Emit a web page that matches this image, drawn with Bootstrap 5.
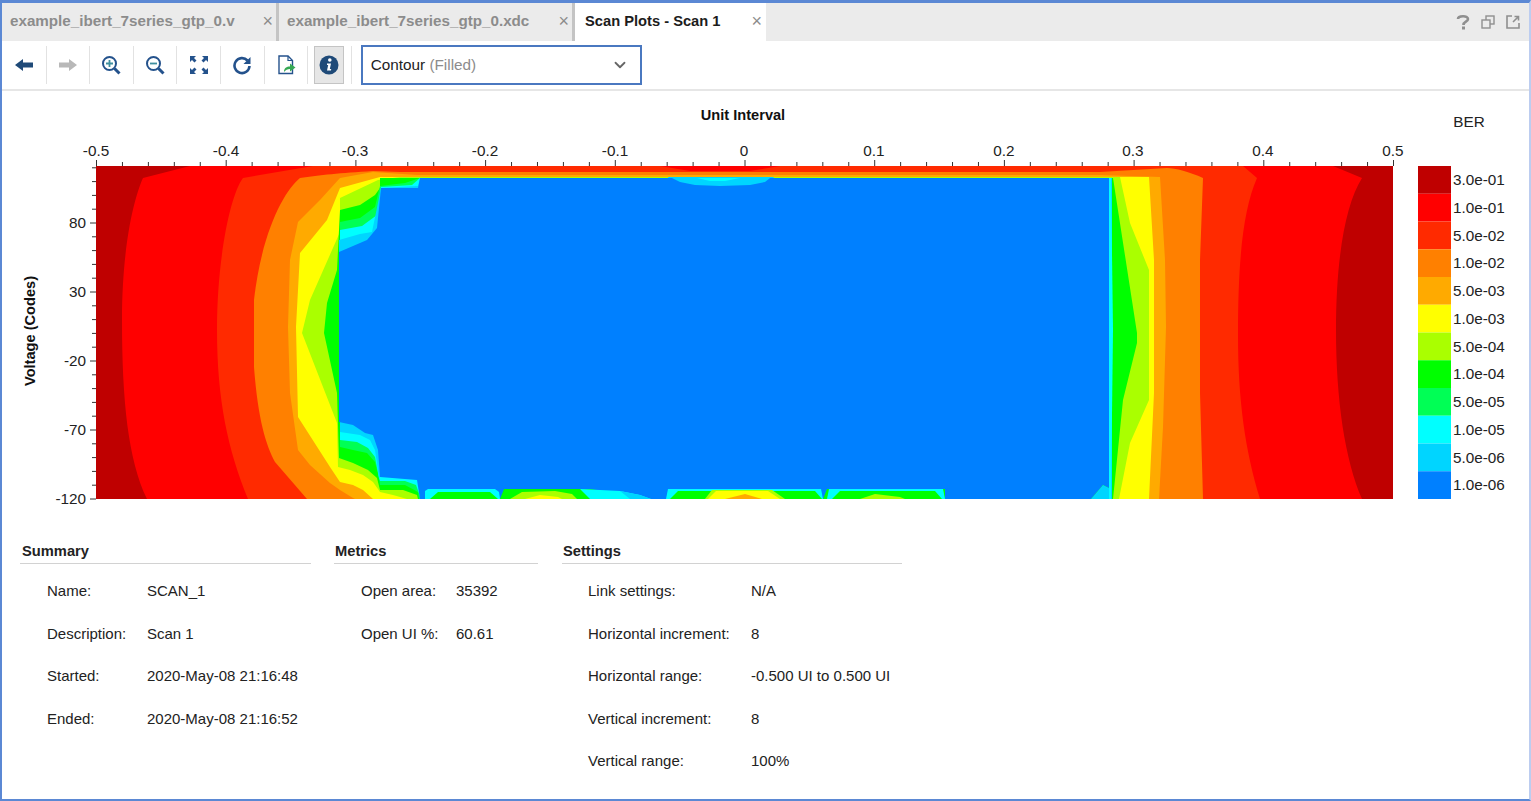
<!DOCTYPE html>
<html lang="en">
<head>
    <meta charset="UTF-8">
    <meta name="viewport" content="width=device-width, initial-scale=1.0">
    <title>Scan Plots - Scan 1</title>
    <link href="https://cdn.jsdelivr.net/npm/bootstrap@5.3.0/dist/css/bootstrap.min.css" rel="stylesheet">
    <style>
        html, body { height: 100%; }
        body {
            font-family: "Liberation Sans", Arial, sans-serif;
            font-size: 15px;
            color: #222;
            overflow: hidden;
        }
        .app-window {
            height: 801px;
            border: 2px solid #5b88d4;
            border-top-width: 3px;
            border-right-color: #bccdf0;
        }
        .tab-strip { height: 38px; background: #ebebeb; }
        .tab-item {
            height: 36px;
            font-weight: 700;
            font-size: 15.2px;
            color: #8c8c8c;
            border-right: 3px solid #c4c4c4;
        }
        .tab-strip > .tab-item { align-self: flex-start; height: 38px; padding-bottom: 2px; }
        .tab-item.t1 { width: 277px; padding-left: 8px; }
        .tab-item.t2 { width: 296px; padding-left: 8px; }
        .tab-item.t1 .tab-close, .tab-item.t2 .tab-close { margin-right: 3px; }
        .tab-item.active {
            width: 191px;
            padding-left: 10px;
            font-size: 14.7px;
            background: #fff;
            color: #1c1c1c;
            border-right: 0;
        }
        .tab-close { color: #8c8c8c; font-weight: 400; font-size: 18px; }
        .tab-tools { gap: 11px; padding-right: 9px; }
        .tool-bar {
            height: 50px;
            border-bottom: 2px solid #e6e6e6;
            padding-left: 1px;
        }
        .tool-btn {
            width: 43.6px;
            height: 38px;
            border-right: 1px solid #e2e2e2;
        }
        .tool-btn.is-on svg {
            background: #e6e6e6;
            box-shadow: 0 0 0 1px #c4c4c4;
            box-sizing: content-box;
            height: 20px;
            width: 20px;
            padding: 8px 4px;
        }
        .mode-select {
            width: 281px;
            height: 40px;
            margin-left: 9px;
            border: 2px solid #4a78c0;
            border-radius: 0;
            font-size: 15.3px;
            color: #222;
            padding: 7px 12px 0 8px;
            background-image: url("data:image/svg+xml,%3csvg xmlns='http://www.w3.org/2000/svg' viewBox='0 0 16 16'%3e%3cpath fill='none' stroke='%23666' stroke-linecap='round' stroke-linejoin='round' stroke-width='2.4' d='m2 5 6 6 6-6'/%3e%3c/svg%3e");
        }
        .mode-select span { color: #8c8c8c; }
        .plot { display: block; }
        .plot text { font-family: "Liberation Sans", Arial, sans-serif; font-size: 15.3px; fill: #222; }
        .plot .axis-title { font-weight: 700; font-size: 14.6px; fill: #111; }
        .details { padding-left: 18px; }
        .detail-group .heading {
            font-weight: 700;
            font-size: 14.7px;
            color: #222;
            height: 25px;
            line-height: 24px;
            padding-left: 1px;
            border-bottom: 1px solid #d2d2d2;
            margin-bottom: 6px;
        }
        .g-summary .heading { padding-left: 2px; }
        .detail-row { height: 42.5px; line-height: 42.5px; padding-left: 27px; white-space: nowrap; }
        .g-summary { width: 291px; margin-right: 23px; }
        .g-metrics { width: 204px; margin-right: 24px; }
        .g-settings { width: 340px; }
        .g-settings .detail-row { padding-left: 26px; }
        .g-summary .lbl { width: 100px; }
        .g-metrics .lbl { width: 95px; }
        .g-settings .lbl { width: 163px; }
    </style>
</head>
<body class="m-0">
    <div class="app-window d-flex flex-column bg-white">
        <!-- Tabs -->
        <div class="tab-strip d-flex align-items-center">
            <div class="tab-item t1 d-flex align-items-center justify-content-between">
                <span>example_ibert_7series_gtp_0.v</span><span class="tab-close">&#215;</span>
            </div>
            <div class="tab-item t2 d-flex align-items-center justify-content-between">
                <span>example_ibert_7series_gtp_0.xdc</span><span class="tab-close">&#215;</span>
            </div>
            <div class="tab-item active d-flex align-items-center justify-content-between pe-1">
                <span>Scan Plots - Scan 1</span><span class="tab-close">&#215;</span>
            </div>
            <div class="tab-tools d-flex align-items-center ms-auto">
                <svg width="14" height="16" viewBox="0 0 14 16"><path d="M2 5 C2 1.5 12 1 12 5 C12 8 7.5 7.5 7.5 11" fill="none" stroke="#8f8f8f" stroke-width="2.6"/><rect x="6" y="12.5" width="3" height="3" fill="#8f8f8f"/></svg>
                <svg width="14" height="14" viewBox="0 0 14 14" fill="#ebebeb" stroke="#8f8f8f" stroke-width="1.4"><rect x="5" y="1" width="8" height="8"/><rect x="1" y="5" width="8" height="8"/></svg>
                <svg width="14" height="14" viewBox="0 0 14 14" fill="none" stroke="#8f8f8f" stroke-width="1.6"><path d="M6 1H1V13H13V8"/><path d="M7 7L12 2M8.5 1.5H12.5V5.5"/></svg>
            </div>
        </div>

        <!-- Toolbar -->
        <div class="tool-bar d-flex align-items-center">
            <div class="tool-btn d-flex align-items-center justify-content-center">
                <svg width="20" height="20" viewBox="0 0 20 20"><path d="M1 10L9 4V7.5H19V12.5H9V16Z" fill="#1f4a78"/></svg>
            </div>
            <div class="tool-btn d-flex align-items-center justify-content-center">
                <svg width="20" height="20" viewBox="0 0 20 20"><path d="M19 10L11 4V7.5H1V12.5H11V16Z" fill="#b8b8b8"/></svg>
            </div>
            <div class="tool-btn d-flex align-items-center justify-content-center">
                <svg width="20" height="20" viewBox="0 0 20 20" fill="none" stroke="#24528c"><circle cx="8.5" cy="8.5" r="6.5" stroke-width="2"/><path d="M13.5 13.5L18.5 18.5" stroke-width="3"/><path d="M8.5 5V12M5 8.5H12" stroke="#3f8f9f" stroke-width="1.8"/></svg>
            </div>
            <div class="tool-btn d-flex align-items-center justify-content-center">
                <svg width="20" height="20" viewBox="0 0 20 20" fill="none" stroke="#24528c"><circle cx="8.5" cy="8.5" r="6.5" stroke-width="2"/><path d="M13.5 13.5L18.5 18.5" stroke-width="3"/><path d="M5 8.5H12" stroke="#3f8f9f" stroke-width="1.8"/></svg>
            </div>
            <div class="tool-btn d-flex align-items-center justify-content-center">
                <svg width="20" height="20" viewBox="0 0 20 20" fill="#24528c"><path d="M1 1H7L5 3L7.5 5.5L5.5 7.5L3 5L1 7ZM19 1V7L17 5L14.5 7.5L12.5 5.5L15 3L13 1ZM1 19V13L3 15L5.5 12.5L7.5 14.5L5 17L7 19ZM19 19H13L15 17L12.5 14.5L14.5 12.5L17 15L19 13Z"/></svg>
            </div>
            <div class="tool-btn d-flex align-items-center justify-content-center">
                <svg width="20" height="20" viewBox="0 0 20 20" fill="none"><path d="M15.5 5.5A7.5 7.5 0 1 0 17.5 11" stroke="#24528c" stroke-width="2.6"/><path d="M18.5 2V9H11.5Z" fill="#24528c"/></svg>
            </div>
            <div class="tool-btn d-flex align-items-center justify-content-center">
                <svg width="20" height="20" viewBox="0 0 20 20"><path d="M3 1H12L16.5 5.5V18.5H3Z" fill="#fff" stroke="#24528c" stroke-width="1.4"/><path d="M12 1V5.5H16.5" fill="none" stroke="#24528c" stroke-width="1.2"/><path d="M8 17C8 13 10.5 11.5 14 11.5V8.5L19.5 12.5L14 16.5V14C11.5 14 9.5 15 8 17Z" fill="#35a853"/></svg>
            </div>
            <div class="tool-btn is-on d-flex align-items-center justify-content-center">
                <svg viewBox="0 0 20 20"><circle cx="10" cy="10" r="9.5" fill="#1f4a78"/><circle cx="10.8" cy="5" r="1.8" fill="#fff"/><path d="M8 8.5H12L10.8 14H12.2L12 15.5H8L9.2 10H8Z" fill="#fff"/></svg>
            </div>
            <div class="form-select mode-select">Contour <span>(Filled)</span></div>
        </div>

        <!-- Plot -->
        <svg class="plot" id="plot" width="1527" height="448" viewBox="2 91 1527 448">
            <text class="axis-title" x="743" y="120" text-anchor="middle">Unit Interval</text>
            <text class="axis-title" transform="translate(35 331) rotate(-90)" text-anchor="middle">Voltage (Codes)</text>

            <g text-anchor="middle">
                <text x="96" y="156">-0.5</text><text x="226" y="156">-0.4</text><text x="355" y="156">-0.3</text>
                <text x="485" y="156">-0.2</text><text x="615" y="156">-0.1</text><text x="744" y="156">0</text>
                <text x="874" y="156">0.1</text><text x="1004" y="156">0.2</text><text x="1133" y="156">0.3</text>
                <text x="1263" y="156">0.4</text><text x="1393" y="156">0.5</text>
            </g>
            <g text-anchor="end">
                <text x="86" y="228">80</text><text x="86" y="297">30</text><text x="86" y="366">-20</text>
                <text x="86" y="435">-70</text><text x="86" y="504">-120</text>
            </g>

            <!-- contour bands, outermost first -->
            <rect x="96" y="166" width="1297" height="333" fill="#bf0000"/>
            <path fill="#ff0000" d="M190,166L143,178C133,200 122,250 122,320C122,400 128,460 147,499L1362,499C1345,460 1336,400 1336,330C1336,260 1345,205 1362,178L1333,166Z"/>
            <path fill="#ff2a00" d="M313,166L243,178C230,195 217,260 217,330C217,400 228,450 248,499L1260,499C1245,450 1238,400 1238,335C1238,260 1243,210 1257,178L1243,166Z"/>
            <polygon fill="#ff0000" points="660,166 780,166 750,171 690,171"/>
            <path fill="#ff8000" d="M373,171C340,173 320,175 300,178C285,190 262,230 254,300L254,367C258,420 266,445 275,462L307,499L1203,499L1200,393L1200,260L1203,178C1190,172 1175,168 1167,168L1100,172L400,172Z"/>
            <polygon fill="#ffaa00" points="373,172 340,178 320,200 298,222 290,260 288,327 290,393 298,450 310,465 330,483 340,490 353,498 355,499 1159,499 1163,427 1166,327 1165,260 1160,177 1100,175 417,175"/>
            <polygon fill="#ffff00" points="380,177 340,188 327,220 300,253 296,327 298,417 330,467 340,482 353,485 363,490 373,499 1149,499 1154,393 1154,260 1149,177"/>
            <polygon fill="#aaff00" points="378,180 340,198 340,232 310,300 302,333 337,423 338,467 350,470 363,475 373,482 380,492 393,495 407,499 1119,499 1130,443 1149,400 1149,270 1130,223 1120,177 400,177"/>
            <polygon fill="#00ff00" points="338,250 340,210 360,205 375,195 380,188 380,178 1113,178 1137,333 1137,343 1123,400 1113,499 418,499 417,495 403,490 380,490 377,478 368,470 353,463 339,458 337,393 324,333 327,303 337,270"/>
            <polygon fill="#00ff55" points="340,222 360,218 375,207 380,186 405,183 420,178 420,499 419,499 418,492 405,485 380,485 379,478 375,462 367,453 353,450 340,447"/>
            <polygon fill="#00ffff" points="340,230 362,226 377,215 381,187 412,185 420,178 421,499 416,485 405,481 380,481 379,478 375,457 368,448 357,442 340,440"/>
            <polygon fill="#00d5ff" points="339,240 360,234 372,232 381,188 418,186 420,178 420,470 380,477 379,478 375,450 370,440 360,435 340,432"/>
            <polygon fill="#00d5ff" points="1109,178 1112,178 1112,499 1109,499"/>
            <polygon fill="#00ffff" points="1109,178 1111,178 1113,330 1111,499 1109,499"/>
            <polygon fill="#00d5ff" points="668,177 774,177 768,186 672,186"/>
            <polygon fill="#0080ff" points="420,178 672,178 680,182 695,185 720,186 750,185 765,182 770,178 1109,178 1109,488 1103,485 1091,499 945,499 945,489 827,489 823,499 666,499 651,499 630,495 590,489 504,489 500,499 424,499 420,499 417,480 380,477 378,450 373,435 365,433 353,425 339,422 339,252 367,240 377,228 381,188 418,188"/>
            <polygon fill="#00ffff" points="697,178 740,178 725,181 710,181"/>

            <!-- bottom bumps -->
            <polygon fill="#00ffff" points="425,499 425,491 428,489 495,489 499,492 500,499"/>
            <polygon fill="#00ff00" points="430,499 438,492 490,492 498,499"/>
            <polygon fill="#00ffff" points="580,489 620,491 640,495 651,499 590,499"/>
            <polygon fill="#00d5ff" points="620,491 640,495 651,499 630,499"/>
            <polygon fill="#00ff00" points="504,499 505,489 580,489 583,499"/>
            <polygon fill="#aaff00" points="510,499 522,492 555,491 572,494 577,499"/>
            <polygon fill="#ffff00" points="525,499 540,495 558,497 562,499"/>
            <polygon fill="#00ffff" points="666,499 668,489 821,489 823,499"/>
            <polygon fill="#00ff00" points="670,499 678,491 815,491 822,499"/>
            <polygon fill="#aaff00" points="705,499 712,490 772,490 785,499"/>
            <polygon fill="#ffff00" points="708,499 716,491 768,491 780,499"/>
            <polygon fill="#ffaa00" points="725,499 745,494 762,499"/>
            <polygon fill="#00ffff" points="827,499 829,489 943,489 945,499"/>
            <polygon fill="#00ff00" points="832,499 840,491 935,491 942,499"/>
            <polygon fill="#aaff00" points="860,499 875,494 900,497 905,499"/>
            <polygon fill="#00d5ff" points="1091,499 1103,485 1109,488 1109,499"/>

            <g id="legend"></g>
            <text x="1469" y="127" text-anchor="middle">BER</text>
            <g id="ticks" stroke="#333" stroke-width="1"></g>
        </svg>

        <!-- Summary tables -->
        <div class="details d-flex align-items-start">
            <div class="detail-group g-summary">
                <div class="heading">Summary</div>
                <div class="detail-row d-flex"><span class="lbl">Name:</span><span>SCAN_1</span></div>
                <div class="detail-row d-flex"><span class="lbl">Description:</span><span>Scan 1</span></div>
                <div class="detail-row d-flex"><span class="lbl">Started:</span><span>2020-May-08 21:16:48</span></div>
                <div class="detail-row d-flex"><span class="lbl">Ended:</span><span>2020-May-08 21:16:52</span></div>
            </div>
            <div class="detail-group g-metrics">
                <div class="heading">Metrics</div>
                <div class="detail-row d-flex"><span class="lbl">Open area:</span><span>35392</span></div>
                <div class="detail-row d-flex"><span class="lbl">Open UI %:</span><span>60.61</span></div>
            </div>
            <div class="detail-group g-settings">
                <div class="heading">Settings</div>
                <div class="detail-row d-flex"><span class="lbl">Link settings:</span><span>N/A</span></div>
                <div class="detail-row d-flex"><span class="lbl">Horizontal increment:</span><span>8</span></div>
                <div class="detail-row d-flex"><span class="lbl">Horizontal range:</span><span>-0.500 UI to 0.500 UI</span></div>
                <div class="detail-row d-flex"><span class="lbl">Vertical increment:</span><span>8</span></div>
                <div class="detail-row d-flex"><span class="lbl">Vertical range:</span><span>100%</span></div>
            </div>
        </div>
    </div>

    <script src="https://cdn.jsdelivr.net/npm/bootstrap@5.3.0/dist/js/bootstrap.bundle.min.js"></script>
    <script>
        const NS = 'http://www.w3.org/2000/svg';

        function add(parent, tag, attrs, text) {
            const el = document.createElementNS(NS, tag);
            Object.keys(attrs).forEach(k => el.setAttribute(k, attrs[k]));
            if (text) el.textContent = text;
            parent.appendChild(el);
        }

        // Axis ticks
        const ticks = document.getElementById('ticks');
        for (let i = 0; i <= 50; i++) {
            const x = 96.5 + i * 25.94;
            add(ticks, 'line', { x1: x, x2: x, y1: i % 5 === 0 ? 160 : 162, y2: 166 });
        }
        for (let i = 0; i <= 24; i++) {
            const y = 499 - i * 13.8;
            if (y < 166) break;
            add(ticks, 'line', { x1: i % 5 === 0 ? 90 : 92, x2: 96, y1: y, y2: y });
        }

        // BER legend
        const legend = document.getElementById('legend');
        const bands = [
            ['#bf0000', '3.0e-01'], ['#ff0000', '1.0e-01'], ['#ff2a00', '5.0e-02'], ['#ff8000', '1.0e-02'],
            ['#ffaa00', '5.0e-03'], ['#ffff00', '1.0e-03'], ['#aaff00', '5.0e-04'], ['#00ff00', '1.0e-04'],
            ['#00ff55', '5.0e-05'], ['#00ffff', '1.0e-05'], ['#00d5ff', '5.0e-06'], ['#0080ff', '1.0e-06']
        ];
        bands.forEach((b, i) => {
            const y = 166 + i * 27.75;
            add(legend, 'rect', { x: 1418, y: y, width: 33, height: 27.75, fill: b[0] });
            add(legend, 'text', { x: 1453, y: y + 19 }, b[1]);
        });
    </script>
</body>
</html>
